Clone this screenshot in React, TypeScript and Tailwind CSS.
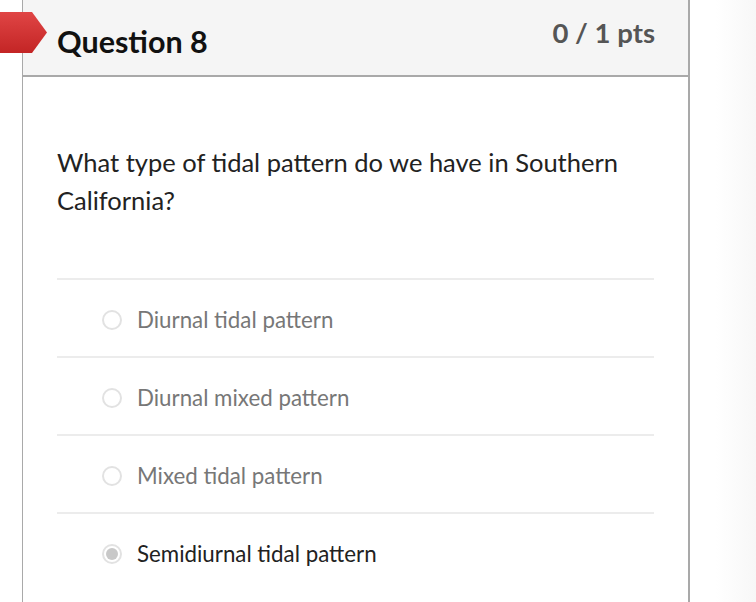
import React from "react";

const answers = [
  { label: "Diurnal tidal pattern", selected: false },
  { label: "Diurnal mixed pattern", selected: false },
  { label: "Mixed tidal pattern", selected: false },
  { label: "Semidiurnal tidal pattern", selected: true },
];

function Radio({ selected }: { selected: boolean }) {
  return (
    <span className="w-[20px] h-[20px] rounded-full border-2 border-[#e2e2e2] bg-white flex items-center justify-center shrink-0">
      {selected && <span className="w-[12px] h-[12px] rounded-full bg-[#c8c8c8]" />}
    </span>
  );
}

export default function App() {
  return (
    <div
      className="relative w-[756px] h-[602px] overflow-hidden bg-white"
      style={{ fontFamily: "Lato, 'Open Sans', sans-serif" }}
    >
      <div className="absolute right-0 top-0 h-full w-[40px] bg-gradient-to-r from-white to-[#f7f7f7]" />
      <div className="relative ml-[22px] w-[668px] h-full border-l border-r-2 border-[#a9a9a9]">
        <div className="h-[77px] bg-[#f5f5f5] border-b-2 border-[#a9a9a9] flex justify-between pl-[34px] pr-[33px]">
          <h2 className="text-[30.5px] font-bold text-[#111] mt-[23px] leading-[36px]">Question 8</h2>
          <div className="text-[27.5px] font-bold text-[#555] mt-[15px] leading-[36px]">0 / 1 pts</div>
        </div>
        <div className="px-[34px] pt-[66px]">
          <p className="text-[25.5px] leading-[38px] text-[#222] w-[598px]">
            What type of tidal pattern do we have in Southern California?
          </p>
          <div className="mt-[59px]">
            {answers.map((a) => (
              <div
                key={a.label}
                className="h-[78px] border-t-2 border-[#ececec] flex items-center pt-[4px] pl-[45px] gap-[15px]"
              >
                <Radio selected={a.selected} />
                <span className={`text-[22.3px] ${a.selected ? "text-[#222]" : "text-[#777]"}`}>{a.label}</span>
              </div>
            ))}
          </div>
        </div>
      </div>
      <svg className="absolute left-0 top-[12px]" width="48" height="41" viewBox="0 0 48 41">
        <defs>
          <linearGradient id="rg" x1="0" y1="0" x2="0" y2="1">
            <stop offset="0" stopColor="#e04545" />
            <stop offset="1" stopColor="#c32525" />
          </linearGradient>
        </defs>
        <path d="M0 0 H32 L47 20.5 L32 41 H0 Z" fill="url(#rg)" />
      </svg>
    </div>
  );
}
